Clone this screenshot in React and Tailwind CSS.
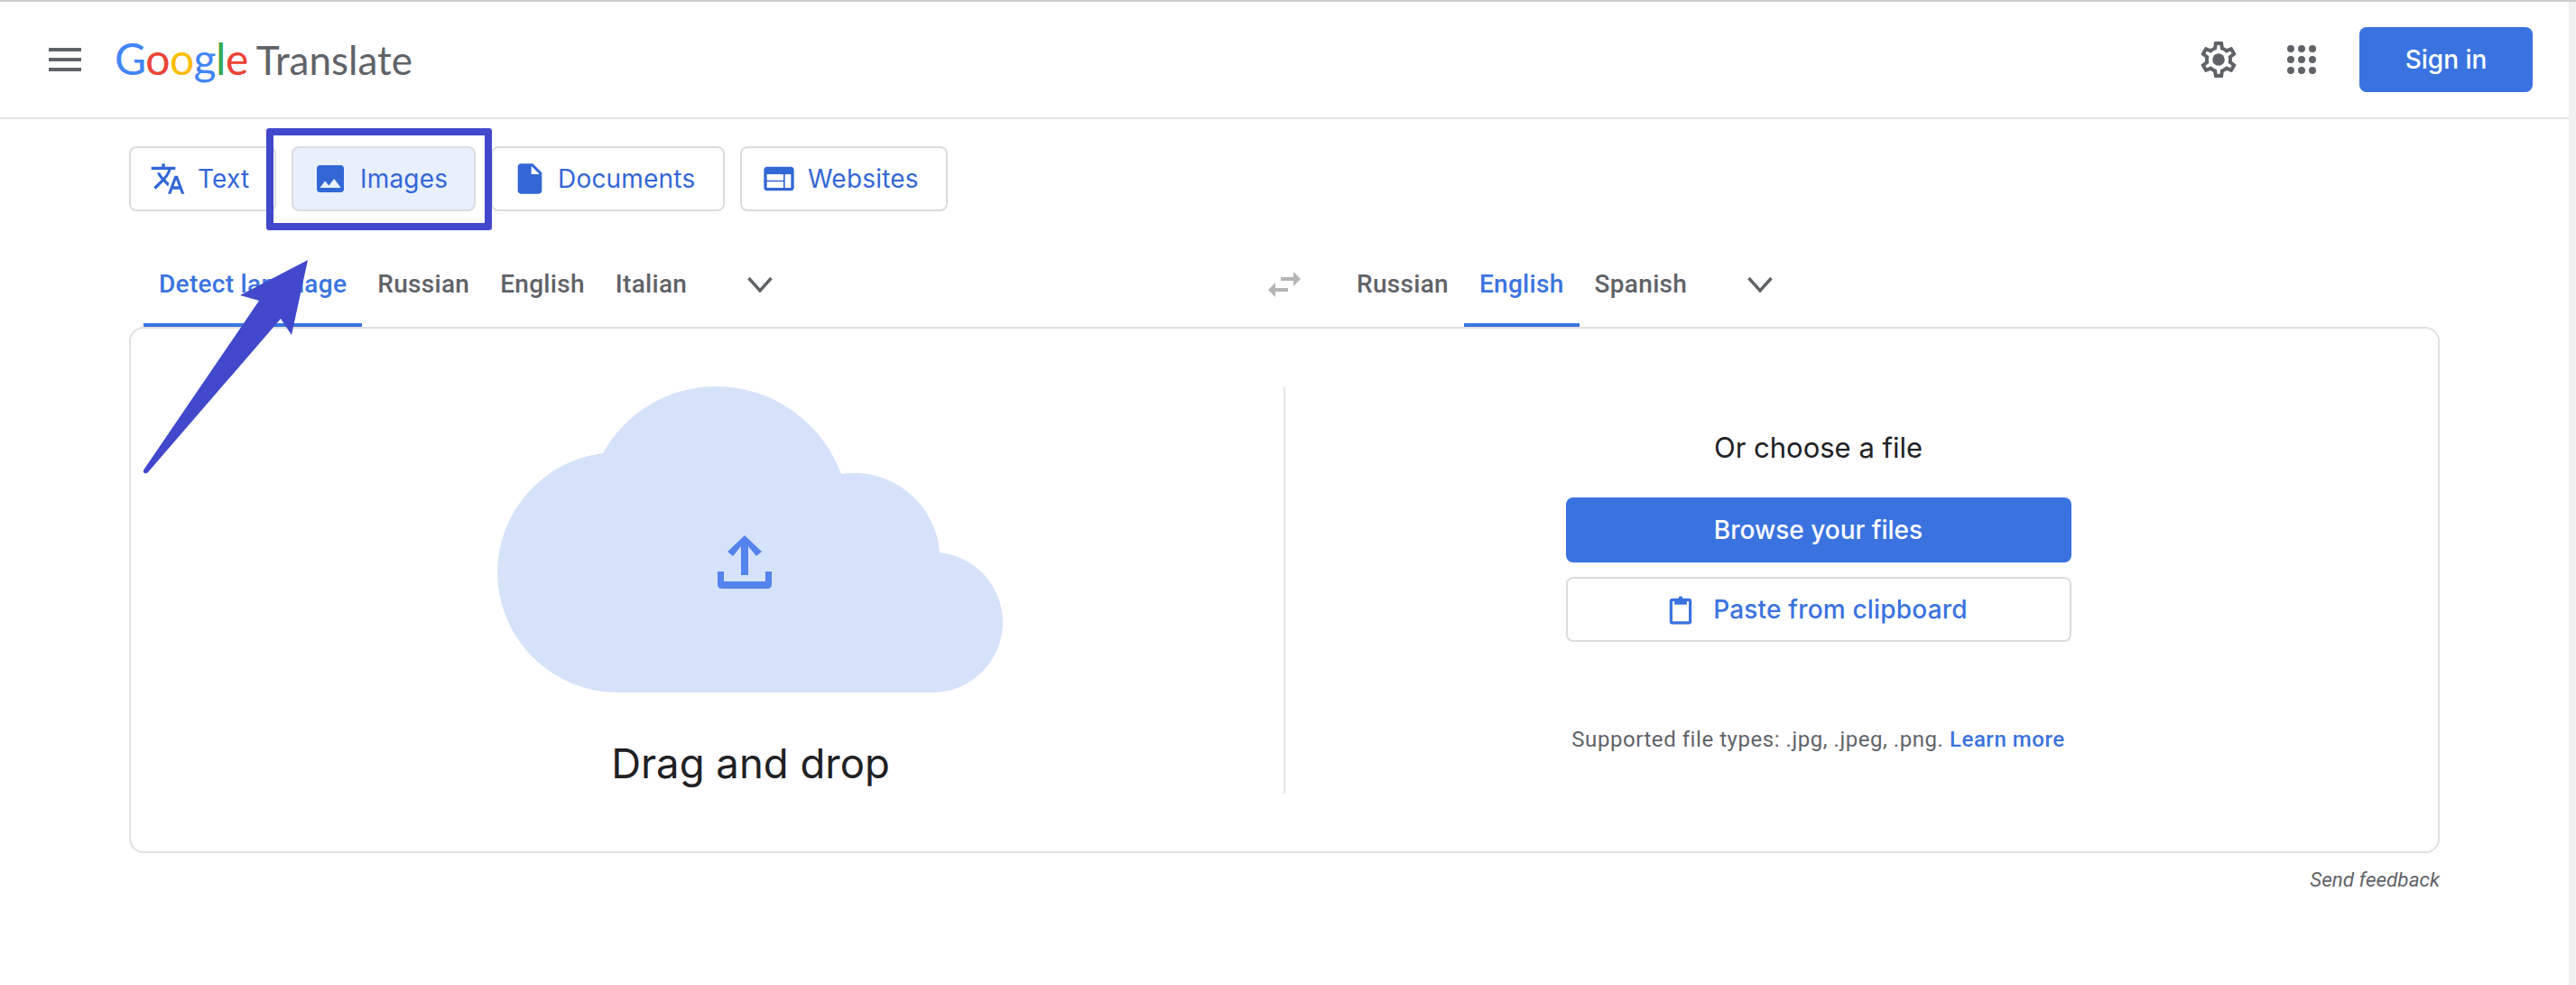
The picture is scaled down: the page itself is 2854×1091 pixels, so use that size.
import React from 'react';

const sans = "font-['Inter','Liberation_Sans',sans-serif]";

function Icon({ d, className }) {
  return (
    <svg viewBox="0 0 24 24" className={className} fill="currentColor">
      <path d={d} />
    </svg>
  );
}

const icons = {
  text: 'M12.87 15.07l-2.54-2.51.03-.03c1.74-1.94 2.98-4.17 3.71-6.53H17V4h-7V2H8v2H1v1.99h11.17C11.5 7.92 10.33 9.75 9 11.22 8.07 10.19 7.3 9.06 6.69 8h-2c.73 1.63 1.73 3.17 2.98 4.56l-5.09 5.02L4 19l5-5 3.11 3.11.76-2.04zM18.5 10h-2L12 22h2l1.12-3h4.75L21 22h2l-4.5-12zm-2.62 7l1.62-4.33L19.12 17h-3.24z',
  image: 'M21 19V5c0-1.1-.9-2-2-2H5c-1.1 0-2 .9-2 2v14c0 1.1.9 2 2 2h14c1.1 0 2-.9 2-2zM8.5 13.5l2.5 3.01L14.5 12l4.5 6H5l3.5-4.5z',
  doc: 'M14 2H6c-1.1 0-1.99.9-1.99 2L4 20c0 1.1.89 2 1.99 2H18c1.1 0 2-.9 2-2V8l-6-6zm-1 7V3.5L18.5 9H13z',
  web: 'M20 4H4c-1.1 0-1.99.9-1.99 2L2 18c0 1.1.9 2 2 2h16c1.1 0 2-.9 2-2V6c0-1.1-.9-2-2-2zm-5 14H4v-4h11v4zm0-5H4V9h11v4zm5 5h-4V9h4v9z',
  gear: 'M19.43 12.98c.04-.32.07-.64.07-.98s-.03-.66-.07-.98l2.11-1.65c.19-.15.24-.42.12-.64l-2-3.46c-.12-.22-.39-.3-.61-.22l-2.49 1c-.52-.4-1.08-.73-1.69-.98l-.38-2.65C14.46 2.18 14.25 2 14 2h-4c-.25 0-.46.18-.49.42l-.38 2.65c-.61.25-1.17.59-1.69.98l-2.49-1c-.23-.09-.49 0-.61.22l-2 3.46c-.13.22-.07.49.12.64l2.11 1.65c-.04.32-.07.65-.07.98s.03.66.07.98l-2.11 1.65c-.19.15-.24.42-.12.64l2 3.46c.12.22.39.3.61.22l2.49-1c.52.4 1.08.73 1.69.98l.38 2.65c.03.24.24.42.49.42h4c.25 0 .46-.18.49-.42l.38-2.65c.61-.25 1.17-.59 1.69-.98l2.49 1c.23.09.49 0 .61-.22l2-3.46c.12-.22.07-.49-.12-.64l-2.11-1.65zm-1.98-1.71c.04.31.05.52.05.73 0 .21-.02.43-.05.73l-.14 1.13.89.7 1.08.84-.7 1.21-1.27-.51-1.04-.42-.9.68c-.43.32-.84.56-1.25.73l-1.06.43-.16 1.13-.2 1.35h-1.4l-.19-1.35-.16-1.13-1.06-.43c-.43-.18-.83-.41-1.23-.71l-.91-.7-1.06.43-1.27.51-.7-1.21 1.08-.84.89-.7-.14-1.13c-.03-.31-.05-.54-.05-.74s.02-.43.05-.73l.14-1.13-.89-.7-1.08-.84.7-1.21 1.27.51 1.04.42.9-.68c.43-.32.84-.56 1.25-.73l1.06-.43.16-1.13.2-1.35h1.39l.19 1.35.16 1.13 1.06.43c.43.18.83.41 1.23.71l.91.7 1.06-.43 1.27-.51.7 1.21-1.07.85-.89.7.14 1.13z',
};

const modes = [
  { label: 'Text', icon: icons.text, w: 'w-[163px]', gap: 'gap-[13px]' },
  { label: 'Images', icon: icons.image, w: 'w-[204px]', gap: 'gap-[13px]', active: true },
  { label: 'Documents', icon: icons.doc, w: 'w-[259px]', gap: 'gap-[11px]' },
  { label: 'Websites', icon: icons.web, w: 'w-[230px]', gap: 'gap-[12px]' },
];

function LangTab({ label, active }) {
  return (
    <div
      className={`flex h-full items-center border-b-4 px-[17px] pt-1 font-['Roboto',sans-serif] text-[28px] font-medium tracking-[0.3px] ${
        active ? 'border-[#3a74e0] text-[#3a74e0]' : 'border-transparent text-[#5f6368]'
      }`}
    >
      {label}
    </div>
  );
}

function Chevron() {
  return (
    <svg viewBox="0 0 40 40" className="ml-[44px] h-10 w-10 text-[#5f6368]" fill="none" stroke="currentColor" strokeWidth="3.4">
      <path d="M7.5 13 20 27 32.500 13" />
    </svg>
  );
}

function Cloud() {
  return (
    <svg viewBox="0 0 561 340" className="h-[340px] w-[561px]">
      <path
        d="M133.500 339A133.500 133.500 0 0 1 0 206A133.500 133.500 0 0 1 117 74A142.600 142.600 0 0 1 242 0A148 148 0 0 1 381 97A95 95 0 0 1 490 184A78 78 0 0 1 560 261A78 78 0 0 1 483 339Z"
        fill="#d6e2fa"
      />
      <path
        d="M274 165 293 183 287 188 278 177V209H270V177L261 188 255 183ZM244 205h7v11h46v-11h7v14q0 5-5 5h-50q-5 0-5-5z"
        fill="#5383ec"
      />
    </svg>
  );
}

export default function App() {
  return (
    <div className="relative h-screen w-full overflow-hidden bg-white">
      <div className="h-[2px] bg-[#cccccc]" />
      <div className="flex h-[1089px]">
        <div className="min-w-0 flex-1">
          {/* Header */}
          <header className="flex h-[130px] items-center justify-between border-b-2 border-[#dfe0e1] pl-[52px] pr-10">
            <div className="flex items-center">
              <svg viewBox="0 0 40 40" className="h-10 w-10 text-[#5f6368]" fill="currentColor">
                <path d="M2 7h36v4H2zM2 18h36v4H2zM2 29h36v4H2z" />
              </svg>
              <div className="mb-[3px] ml-[35px] flex items-baseline font-['Lato',sans-serif] text-[48px] leading-none">
                <span className="tracking-[-0.5px]">
                  <span className="text-[#4285f4]">G</span>
                  <span className="text-[#ea4335]">o</span>
                  <span className="text-[#fbbc05]">o</span>
                  <span className="text-[#4285f4]">g</span>
                  <span className="text-[#34a853]">l</span>
                  <span className="text-[#ea4335]">e</span>
                </span>
                <span className="ml-[9px] text-[44px] text-[#5f6368]">Translate</span>
              </div>
            </div>
            <div className="flex items-center">
              <svg viewBox="0 0 24 24" className="h-12 w-12 text-[#5f6368]" fill="currentColor">
                <path d={icons.gear} />
                <circle cx="12" cy="12" r="3.4" />
              </svg>
              <svg viewBox="0 0 32 32" className="ml-[52px] h-8 w-8 text-[#5f6368]" fill="currentColor">
                {[4, 16, 28].flatMap((y) =>
                  [4, 16, 28].map((x) => <circle key={`${x}-${y}`} cx={x} cy={y} r="4" />)
                )}
              </svg>
              <button className={`ml-12 h-[72px] w-[192px] rounded-lg bg-[#3a73e0] text-[28px] font-medium text-white ${sans}`}>
                Sign in
              </button>
            </div>
          </header>

          <main className="pl-[143px] pr-[143px]">
            {/* Mode buttons */}
            <div className="flex gap-[17px] pt-[30px]">
              {modes.map((m) => (
                <div
                  key={m.label}
                  className={`flex h-[72px] items-center rounded-lg border-2 border-[#dadce0] pl-[21px] text-[#3367d6] ${m.w} ${m.gap} ${
                    m.active ? 'bg-[#e8f0fe]' : 'bg-white'
                  }`}
                >
                  <Icon d={m.icon} className="h-10 w-10 shrink-0" />
                  <span className={`text-[28px] tracking-[0.2px] ${sans}`}>{m.label}</span>
                </div>
              ))}
            </div>

            {/* Language tabs */}
            <div className="mt-[34px] flex h-[94px] items-center">
              <div className="h-full flex-1">
                <div className="flex h-full items-center pl-4">
                  <LangTab label="Detect language" active />
                  <LangTab label="Russian" />
                  <LangTab label="English" />
                  <LangTab label="Italian" />
                  <Chevron />
                </div>
              </div>
              <svg viewBox="0 0 24 24" className="-mx-1 h-12 w-12 text-[#b5b5b5]" fill="currentColor">
                <path d="M6.99 11 3 15l3.990 4v-3H14v-2H6.990v-3zM21 9l-3.990-4v3H10v2h7.010v3L21 9z" />
              </svg>
              <div className="h-full flex-1">
                <div className="flex h-full items-center pl-[43px]">
                  <LangTab label="Russian" />
                  <LangTab label="English" active />
                  <LangTab label="Spanish" />
                  <Chevron />
                </div>
              </div>
            </div>

            {/* Upload card */}
            <div className="flex h-[583px] rounded-2xl border-2 border-[#e0e0e0] py-16">
              <div className="flex flex-1 flex-col items-center border-r-2 border-[#e6e6e6] pl-24">
                <Cloud />
                <div className={`mt-[48px] text-[45.5px] leading-[60px] text-[#202124] ${sans}`}>Drag and drop</div>
              </div>
              <div className="flex flex-1 flex-col items-center pr-24">
                <div className={`mt-[48px] text-[31px] leading-10 text-[#202124] ${sans}`}>Or choose a file</div>
                <button className={`mt-[35px] h-[72px] w-[560px] rounded-lg bg-[#3a73e0] text-[28px] font-medium text-white ${sans}`}>
                  Browse your files
                </button>
                <button className={`mt-4 flex h-[72px] w-[560px] items-center justify-center gap-[23px] rounded-lg border-2 border-[#dadce0] text-[28px] font-medium tracking-[0.2px] text-[#3a73e0] ${sans}`}>
                  <svg viewBox="0 0 24 32" className="h-[34px] w-[26px]" fill="none" stroke="currentColor" strokeWidth="3">
                    <rect x="2" y="6" width="20" height="24" rx="1.500" />
                    <path d="M7 7h10v2.500H7z" fill="currentColor" />
                    <circle cx="12" cy="4" r="2" fill="currentColor" stroke="none" />
                  </svg>
                  Paste from clipboard
                </button>
                <div className="mt-[92px] font-['Roboto',sans-serif] text-[24px] leading-8 tracking-[0.55px] text-[#5f6368]">
                  Supported file types: .jpg, .jpeg, .png. <span className="font-medium text-[#3a73e0]">Learn more</span>
                </div>
              </div>
            </div>

            <div className="mt-[13px] text-right font-['Roboto',sans-serif] text-[22.5px] italic leading-8 text-[#5f6368]">
              Send feedback
            </div>
          </main>
        </div>
        <div className="w-2 shrink-0 bg-[#f1f1f1]" />
      </div>

      {/* Annotation box and arrow drawn over the page */}
      <div className="absolute left-[295px] top-[142px] h-[113px] w-[250px] rounded-[3px] border-8 border-[#4148cc]" />
      <svg viewBox="0 0 190 245" className="absolute left-[155px] top-[285px] h-[245px] w-[190px]" fill="#4148cc">
        <path d="M186 3 111 42 132 48 4.500 235Q3 238 5 239 8 240 9 238L156 68 168 86Z" />
      </svg>
    </div>
  );
}
